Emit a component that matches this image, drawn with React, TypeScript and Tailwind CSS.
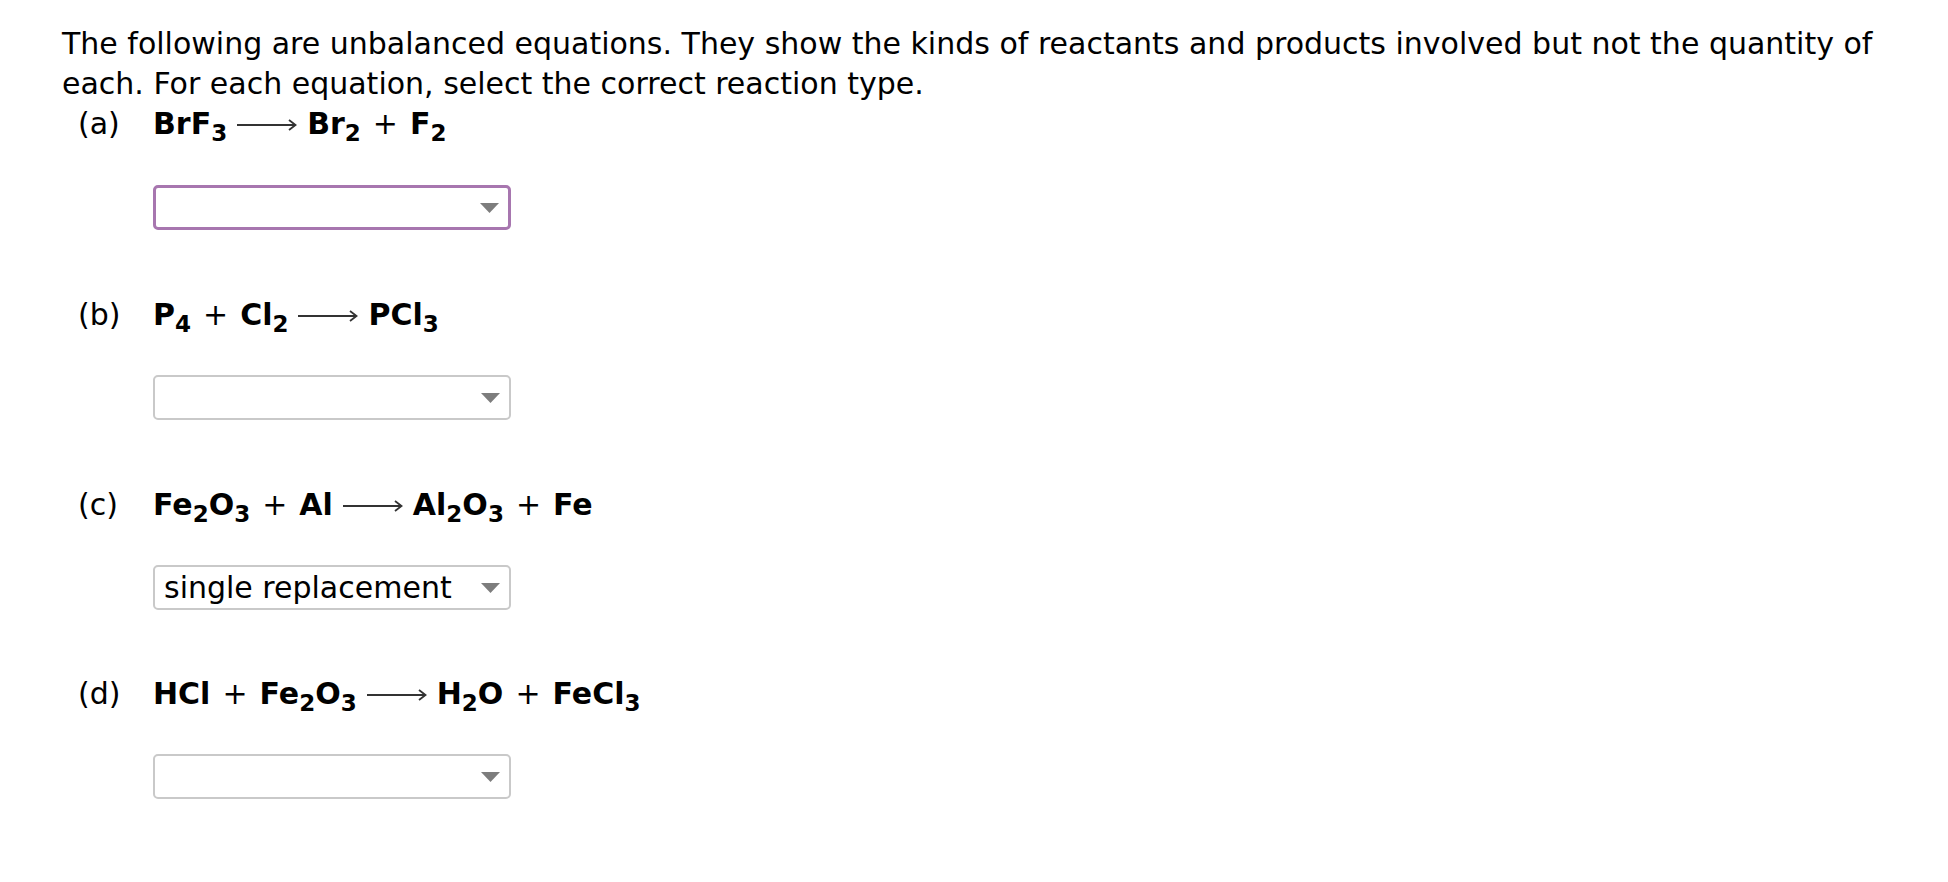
import type { ReactNode } from "react";

function Sub({ children }: { children: ReactNode }) {
  return <span className="text-[23px] leading-none align-[-7px]">{children}</span>;
}

function Plus() {
  return <span className="font-normal mx-[12px]">+</span>;
}

function Arrow() {
  return (
    <svg width="62" height="14" viewBox="0 0 62 14" className="inline-block mx-[9px] align-[2px]">
      <line x1="1" y1="7" x2="59" y2="7" stroke="#333" strokeWidth="1.8" />
      <polyline points="53,2 59.5,7 53,12" fill="none" stroke="#333" strokeWidth="1.8" />
    </svg>
  );
}

function Dropdown({ value, focused }: { value?: string; focused?: boolean }) {
  return (
    <div
      className={`ml-[91px] w-[358px] h-[45px] rounded-[5px] bg-white flex items-center justify-between pl-[9px] pr-[9px] ${
        focused ? "border-[3px] border-[#a776af]" : "border-2 border-[#c9c9c9]"
      }`}
    >
      <span className="text-[30px] leading-none text-black">{value}</span>
      <svg width="19" height="10" viewBox="0 0 19 10" className="shrink-0">
        <polygon points="0,0 19,0 9.5,10" fill="#7d7d7d" />
      </svg>
    </div>
  );
}

function Question({ label, children }: { label: string; children: ReactNode }) {
  return (
    <div className="flex h-[40px] leading-[40px] pl-[16px]">
      <span className="w-[75px]">{label}</span>
      <span className="font-bold whitespace-nowrap">{children}</span>
    </div>
  );
}

export default function App() {
  return (
    <div className="min-h-screen w-full bg-white text-black font-['DejaVu_Sans',sans-serif] text-[30px]">
      <div className="pl-[62px] pt-[24px]">
        <p className="leading-[40px]">
          The following are unbalanced equations. They show the kinds of reactants and products involved but not the quantity of
          <br />
          each. For each equation, select the correct reaction type.
        </p>

        <Question label="(a)">
          BrF<Sub>3</Sub>
          <Arrow />
          Br<Sub>2</Sub>
          <Plus />
          F<Sub>2</Sub>
        </Question>
        <div className="mt-[41px]">
          <Dropdown focused />
        </div>

        <div className="mt-[65px]">
          <Question label="(b)">
            P<Sub>4</Sub>
            <Plus />
            Cl<Sub>2</Sub>
            <Arrow />
            PCl<Sub>3</Sub>
          </Question>
        </div>
        <div className="mt-[40px]">
          <Dropdown />
        </div>

        <div className="mt-[65px]">
          <Question label="(c)">
            Fe<Sub>2</Sub>O<Sub>3</Sub>
            <Plus />
            Al
            <Arrow />
            Al<Sub>2</Sub>O<Sub>3</Sub>
            <Plus />
            Fe
          </Question>
        </div>
        <div className="mt-[40px]">
          <Dropdown value="single replacement" />
        </div>

        <div className="mt-[64px]">
          <Question label="(d)">
            HCl
            <Plus />
            Fe<Sub>2</Sub>O<Sub>3</Sub>
            <Arrow />
            H<Sub>2</Sub>O
            <Plus />
            FeCl<Sub>3</Sub>
          </Question>
        </div>
        <div className="mt-[40px]">
          <Dropdown />
        </div>
      </div>
    </div>
  );
}
